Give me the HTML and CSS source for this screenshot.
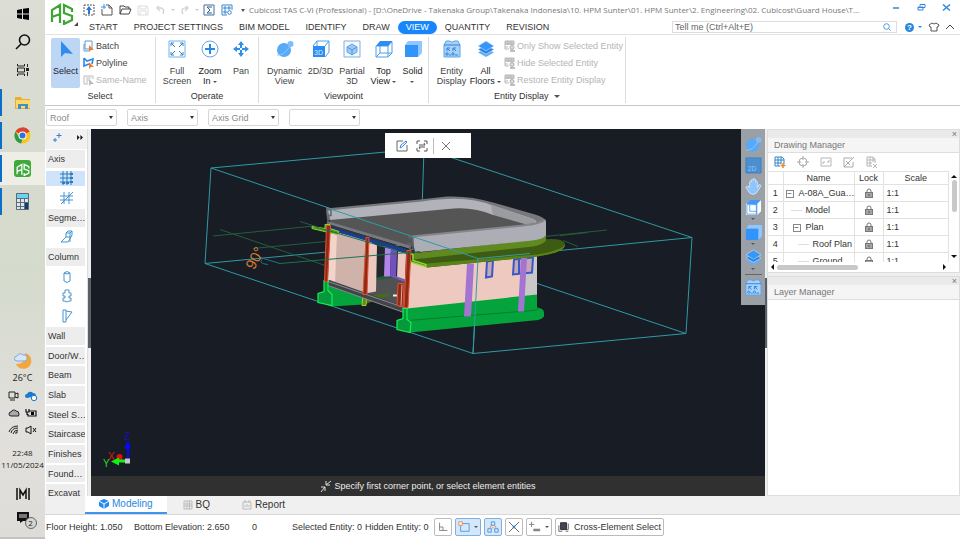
FILE: index.html
```
<!DOCTYPE html>
<html lang="en">
<head>
<meta charset="utf-8">
<title>Cubicost TAS C-VI</title>
<link rel="stylesheet" href="styles.css">
</head>
<body>
<svg class="defs" aria-hidden="true">
  <symbol id="planet" viewBox="0 0 18 18"><circle cx="8" cy="10" r="7" fill="#58a9f8"/><circle cx="14.500" cy="4" r="3" fill="#7dbdfb"/><path d="M1 15Q8 16 14 6" stroke="#8cc6ff" fill="none"/></symbol>
  <symbol id="cube-top" viewBox="0 0 18 18"><path d="M1 6h12v11H1zM5 2h12v11H5M13 17l4-4M1 17l4-4V2" fill="none" stroke="#4d9fe6"/><path d="M1 6l4-5h12.500l-4 5z" fill="#2d8ef0"/></symbol>
  <symbol id="cube-solid" viewBox="0 0 18 18"><path d="M4 1h14v12l-4 4V5H1z" fill="#92c7fd"/><path d="M1 5h13v12H1z" fill="#3194fb"/></symbol>
  <symbol id="layers" viewBox="0 0 18 18"><path d="M9 8l8 4.500L9 17 1 12.500z" fill="#65aff6"/><path d="M9 5l8 4.500L9 14 1 9.500z" fill="#2881df" stroke="#cfe6ff" stroke-width=".6"/><path d="M9 1l8 5-8 5-8-5z" fill="#3797f8" stroke="#cfe6ff" stroke-width=".6"/></symbol>
  <symbol id="entity" viewBox="0 0 18 18"><path d="M3 1h4l1 1h2l1-1h4l2 4v12H1V5z" fill="#a9d2fb" stroke="#5ba4e8"/><path d="M1 5h16M4 8l3 3m0-3H4v3M10 8l3 3m0-3h-3v3" stroke="#2c82d6" fill="none"/><circle cx="4" cy="14" r="1.200" fill="none" stroke="#2c82d6"/><circle cx="10" cy="14" r="1.200" fill="none" stroke="#2c82d6"/><path d="M6 15h2m4 0h3" stroke="#2c82d6"/></symbol>
  <symbol id="lock" viewBox="0 0 10 10"><path d="M3 5V3q0-2 2-2t2 2v2" fill="none" stroke="#777"/><rect x="1.500" y="4.500" width="7" height="5" fill="#a5a5a5" stroke="#777"/><path d="M5 6v2" stroke="#555"/></symbol>
  <symbol id="filter" viewBox="0 0 12 12"><path d="M1 1h9v4H1z" fill="#ccc"/><path d="M1 1h9v4M1 1v8h4M1 4h9M4 1v4M7 1v4M1 7h3" fill="none" stroke="#b9b9b9"/><circle cx="8" cy="7.500" r="2" fill="#ddd" stroke="#aaa"/><path d="M6 11h5" stroke="#aaa" stroke-width="1.500"/></symbol>
  <symbol id="mark" viewBox="0 0 24 24"><path d="M2 21V9l8-5v18M2 16l8-3M22 11V8l-8-4v8l8 3v4l-8 4v-4" fill="none" stroke="currentColor" stroke-width="2.200"/></symbol>
</svg>

<div class="desktop">
  <nav class="taskbar" aria-label="Taskbar">
    <button class="task small" aria-label="Start"><svg width="12" height="12" viewBox="0 0 12 12"><path d="M0 2l5-1v4.600H0zM6 .8L12 0v5.600H6zM0 6.400h5V11L0 10zM6 6.400h6V12l-6-1z" fill="#000"/></svg></button>
    <button class="task small" aria-label="Search"><svg width="16" height="16" viewBox="0 0 16 16"><circle cx="9.500" cy="6" r="5" fill="none" stroke="#111" stroke-width="1.600"/><path d="M6 10l-5 5" stroke="#111" stroke-width="1.600"/></svg></button>
    <button class="task small" aria-label="Task view"><svg width="12" height="12" viewBox="0 0 12 12"><path d="M.5 0v2h7V0M.5 12v-2h7v2M.5 4h7v4h-7zM10.500 0v3M10.500 8v4" fill="none" stroke="#222"/><path d="M9 4h3v3H9z" fill="#222"/></svg></button>
    <button class="task open first" aria-label="File Explorer"><svg width="16" height="14" viewBox="0 0 16 14"><path d="M0 1h6l1 2h8v10H0z" fill="#e9ad32"/><path d="M1 4h14v8H1z" fill="#ffd767"/><path d="M3 13V8h10v5h-3v-3H6v3z" fill="#3f8fcb"/></svg></button>
    <button class="task open" aria-label="Chrome"><svg width="17" height="17" viewBox="0 0 18 18"><circle cx="9" cy="9" r="8.500" fill="#f9c51f"/><path d="M9 9L1.600 4.800A8.500 8.500 0 0 1 16.400 4.800z" fill="#dc4335"/><path d="M9 .5a8.500 8.500 0 0 1 7.400 4.500H9z" fill="#dc4335"/><path d="M1.600 4.800L5.500 11.500 9 13l-1.500 4.400A8.500 8.500 0 0 1 1.600 4.800z" fill="#2a9b4b"/><circle cx="9" cy="9" r="4.200" fill="#fff"/><circle cx="9" cy="9" r="3.200" fill="#2b73df"/></svg></button>
    <button class="task open current" aria-label="Cubicost"><span class="as-tile"><svg width="14" height="14"><use href="#mark"/></svg></span></button>
    <button class="task open" aria-label="Calculator"><svg width="13" height="17" viewBox="0 0 13 17"><rect width="13" height="17" rx="1" fill="#596b7a"/><path d="M1 1h11v4H1z" fill="#6bd2ef"/><path d="M1 6h3v3H1zM5 6h3v3H5zM9 6h3v3H9zM1 10h3v3H1zM5 10h3v3H5zM1 14h3v2H1zM5 14h3v2H5z" fill="#dfe5e9"/><path d="M9 10h3v6H9z" fill="#123e6b"/></svg></button>
    <div class="tray">
      <svg width="18" height="18" viewBox="0 0 18 18"><path d="M11 1a8 8 0 1 1-9 11Q12 13 11 1z" fill="#f2a73d"/><path d="M3 9a2.500 2.500 0 0 1 0-5 3.500 3.500 0 0 1 6-1 3 3 0 0 1 2 6z" fill="#d8e6f8" stroke="#7fa8e6"/></svg>
      <span class="temp">26°C</span>
      <div class="tray-icons">
        <svg viewBox="0 0 12 10"><path d="M1 1h6v6H1zM7 3l3-1v5L7 6M2 9h5" fill="none" stroke="#222"/></svg>
        <svg viewBox="0 0 12 10"><path d="M2 7a2 2 0 0 1 0-4 3.500 3.500 0 0 1 6-1q3 0 3 3z" fill="#1b78d0"/><circle cx="9" cy="7" r="2.700" fill="#fff" stroke="#1b78d0"/></svg>
        <svg viewBox="0 0 12 10"><path d="M3 8a2 2 0 0 1 0-4 3 3 0 0 1 5-1q3 0 3 3t-2 2z" fill="#aaa" stroke="#222"/></svg>
        <svg viewBox="0 0 12 10"><path d="M4 3h7v5H3V6M1 1v3h3V1M2 4v3" fill="none" stroke="#111" stroke-width="1.200"/><path d="M6 4h3v3H6z"/></svg>
        <svg viewBox="0 0 12 10"><path d="M1 7Q3 1 10 1M3 8q1-5 7-5M5 9q1-4 5-4M8 9V7h2" fill="none" stroke="#222"/></svg>
        <svg viewBox="0 0 12 10"><path d="M1 3h2l3-2v8L3 7H1zM8 3l3 4M11 3L8 7" fill="none" stroke="#111"/></svg>
      </div>
      <div class="clock"><span>22:48</span><span>11/05/2024</span></div>
      <svg class="m-icon" width="14" height="12" viewBox="0 0 14 12"><path d="M1 0v12M13 0v12M4 11V2l3 5 3-5v9" fill="none" stroke="#111" stroke-width="1.500"/></svg>
      <div class="notice"><svg width="12" height="11" viewBox="0 0 12 11"><path d="M0 0h12v9H6L3 11V9H0z" fill="#111"/><path d="M2 3h8M2 5h8" stroke="#ddd"/></svg><span class="count">2</span></div>
    </div>
  </nav>

  <div class="app">
    <header class="header">
      <div class="logo"><svg width="24" height="24"><use href="#mark"/></svg><i></i></div>
      <div class="titlebar">
        <div class="quick">
          <svg viewBox="0 0 12 12"><path d="M1 1h10v10H1z" fill="none" stroke="#555" stroke-dasharray="2 1"/><path d="M6 2l3 4H7v4H5V6H3z" fill="#2478d8"/></svg>
          <svg viewBox="0 0 12 12"><path d="M5 1h3l3 3v7H1V5" fill="none" stroke="#555"/><path d="M8 1v3h3" fill="none" stroke="#555"/><path d="M3 0v5M0 3h5" stroke="#3a91e9"/></svg>
          <svg viewBox="0 0 12 12"><path d="M1 10V2h4l1 1h4v2M1 10l2-5h9l-2 5z" fill="none" stroke="#444"/></svg>
          <svg viewBox="0 0 12 12"><path d="M1 2h9l1 1v8H1zM3 2v3h6V2M3 11V7h6v4" fill="none" stroke="#ddd"/></svg>
          <svg viewBox="0 0 12 12"><path d="M4 2L2 4l3 3M2 4h4q4 1 2 6" fill="none" stroke="#d5d5d5" stroke-width="1.500"/></svg>
          <i class="caret pale"></i>
          <svg viewBox="0 0 12 12"><path d="M7 2l2 2-3 3M9 4H6Q1 5 4 10" fill="none" stroke="#d5d5d5" stroke-width="1.500"/></svg>
          <i class="caret pale"></i>
          <svg viewBox="0 0 12 12"><path d="M1 1h10v10H1z" fill="none" stroke="#446f98"/><path d="M9 3H4l3 3-3 3h5" fill="none" stroke="#24639d"/></svg>
          <svg viewBox="0 0 12 12"><path d="M1 11V1h10v5M1 11h5M3 3h2v2H3zM7 3h2v2H7zM3 7h2v2H3z" fill="none" stroke="#3484cf"/><circle cx="8.500" cy="8.500" r="1.800" fill="none" stroke="#3484cf"/></svg>
          <i class="caret more"></i>
        </div>
        <div class="doc-title">Cubicost TAS C-VI (Professional) - [D:\OneDrive - Takenaka Group\Takenaka Indonesia\10. HPM Sunter\01. HPM Sunter\2. Engineering\02. Cubicost\Guard House\T…</div>
        <div class="window-buttons">
          <button aria-label="Minimize"><svg viewBox="0 0 9 9"><path d="M1 5h6" stroke="#2e86df" stroke-width="1.500"/></svg></button>
          <button aria-label="Restore"><svg viewBox="0 0 9 9"><path d="M3 3V1.500h5v3H6M1 4h5v3H1zM1 4.500h5" fill="none" stroke="#2e86df"/></svg></button>
          <button aria-label="Close"><svg viewBox="0 0 9 9"><path d="M1 1.500l7 6M8 1.500l-7 6" stroke="#2e86df" stroke-width="1.500"/></svg></button>
        </div>
      </div>
      <div class="menubar">
        <nav class="menu">
          <a href="#">START</a><a href="#">PROJECT SETTINGS</a><a href="#">BIM MODEL</a><a href="#">IDENTIFY</a><a href="#">DRAW</a><a href="#" class="on">VIEW</a><a href="#">QUANTITY</a><a href="#">REVISION</a>
        </nav>
        <div class="search"><input type="text" aria-label="Tell me" placeholder="Tell me (Ctrl+Alt+E)"><svg width="8" height="8" viewBox="0 0 8 8"><circle cx="3.500" cy="3.500" r="2.800" fill="none" stroke="#4d9ce9"/><path d="M5.500 5.500l2 2" stroke="#4d9ce9"/></svg></div>
        <button class="help" aria-label="Help">?</button><i class="caret blue"></i>
        <svg class="shirt" width="10" height="10" viewBox="0 0 10 10"><path d="M3 1q2 2 4 0l3 2-1 2H8v4H2V5H1L0 3z" fill="none" stroke="#555"/></svg>
        <svg width="10" height="8" viewBox="0 0 10 8"><path d="M1 6l4-4 4 4" fill="none" stroke="#444"/></svg>
      </div>
    </header>

    <section class="ribbon" aria-label="View ribbon">
      <div class="group select-group">
        <div class="tools">
          <button class="tool picked"><svg viewBox="0 0 18 18"><path d="M4 1v16l4-4 8 1z" fill="#2f8bee"/></svg><span>Select</span></button>
          <div class="stack">
            <button><svg viewBox="0 0 12 12"><path d="M2 1h7v8H2zM1 4v7h5" fill="none" stroke="#5b9bd2"/><path d="M6 5l5 5-3 0-2 2z" fill="#ee7d31"/></svg>Batch</button>
            <button><svg viewBox="0 0 12 12"><path d="M1 1l3 3 6-2-1 5M1 1v8l5-2" fill="none" stroke="#288ae5" stroke-width="1.600"/><path d="M6 5l5 5-3 0-2 2z" fill="#ee7d31"/></svg>Polyline</button>
            <button disabled><svg viewBox="0 0 12 12"><path d="M1 2h9v3M1 2v8h4M3 4h5M3 6h3M3 8h2" fill="none" stroke="#bbb"/><path d="M6 5l5 5-3 0-2 2z" fill="#bbb"/></svg>Same-Name</button>
          </div>
        </div>
        <div class="caption">Select</div>
      </div>
      <div class="group operate-group">
        <div class="tools">
          <button class="tool"><svg viewBox="0 0 18 18"><path d="M1 1h16v16H1z" fill="none" stroke="#72b3ee"/><path d="M3 6V3h3M3 3l4 4M12 3h3v3M15 3l-4 4M3 12v3h3M3 15l4-4M12 15h3v-3M15 15l-4-4" fill="none" stroke="#3183cc"/></svg><span>Full<br>Screen</span></button>
          <button class="tool dark"><svg viewBox="0 0 18 18"><circle cx="9" cy="9" r="8" fill="none" stroke="#5ba9ee"/><path d="M9 4v10M4 9h10" stroke="#2886e6" stroke-width="2"/></svg><span>Zoom<br>In <i class="caret"></i></span></button>
          <button class="tool"><svg viewBox="0 0 18 18"><path d="M9 1l3 4h-2v3H8V5H6zM9 17l3-4h-2v-3H8v3H6zM1 9l4-3v2h3v2H5v2zM17 9l-4-3v2h-3v2h3v2z" fill="#2e8eed"/></svg><span>Pan</span></button>
        </div>
        <div class="caption">Operate</div>
      </div>
      <div class="group view-group">
        <div class="tools">
          <button class="tool"><svg><use href="#planet"/></svg><span>Dynamic<br>View</span></button>
          <button class="tool"><svg viewBox="0 0 18 18"><path d="M1 6l4-5h12v11l-4 5M13 6l4-5M5 1v5" fill="none" stroke="#4d9fe6"/><path d="M1 6h12v11H1z" fill="#2b8cf2"/><text x="2" y="15" class="tiny">3D</text></svg><span>2D/3D</span></button>
          <button class="tool"><svg viewBox="0 0 18 18"><path d="M1 1h16v16H1z" fill="#f4faff" stroke="#86afd6"/><path d="M9 4l5 3v5l-5 3-5-3V7z" fill="#9bcafa" stroke="#67a6e2"/><path d="M4 7l5 3 5-3M9 10v5" fill="none" stroke="#5596d6"/></svg><span>Partial<br>3D</span></button>
          <button class="tool dark"><svg><use href="#cube-top"/></svg><span>Top<br>View <i class="caret"></i></span></button>
          <button class="tool dark"><svg><use href="#cube-solid"/></svg><span>Solid<br><i class="caret"></i></span></button>
        </div>
        <div class="caption">Viewpoint</div>
      </div>
      <div class="group entity-group">
        <div class="tools">
          <button class="tool"><svg><use href="#entity"/></svg><span>Entity<br>Display</span></button>
          <button class="tool dark"><svg><use href="#layers"/></svg><span>All<br>Floors <i class="caret"></i></span></button>
          <div class="stack">
            <button disabled><svg><use href="#filter"/></svg>Only Show Selected Entity</button>
            <button disabled><svg><use href="#filter"/></svg>Hide Selected Entity</button>
            <button disabled><svg><use href="#filter"/></svg>Restore Entity Display</button>
          </div>
        </div>
        <div class="caption">Entity Display <i class="caret big"></i></div>
      </div>
    </section>

    <div class="selectors">
      <label><select aria-label="Category"><option>Roof</option></select></label>
      <label><select aria-label="Element"><option>Axis</option></select></label>
      <label><select aria-label="Type"><option>Axis Grid</option></select></label>
      <label><select aria-label="Name"><option></option></select></label>
    </div>

    <main class="work">
      <aside class="palette">
        <div class="palette-top"><svg width="9" height="9" viewBox="0 0 9 9"><path d="M6 0v5M3.500 2.500h5M2 5v4M0 7h4" stroke="#3183cc"/></svg><svg width="6" height="5" viewBox="0 0 7 6"><path d="M0 0l3 3-3 3zM4 0l3 3-3 3z" fill="#111"/></svg></div>
        <div class="palette-view"><div class="palette-list">
          <span class="head">Axis</span>
          <button class="pick on" aria-label="Grid"><svg viewBox="0 0 14 14"><path d="M0 3h13M0 7h13M0 11h13M3 0v14M7 0v14M11 0v14" stroke="#2c7cc0"/><path d="M10 2h3v2h-3zM10 6h3v2h-3zM10 10h3v2h-3zM2 11h3v2H2zM6 11h3v2H6z" fill="#2c7cc0"/></svg></button>
          <button class="pick" aria-label="Auxiliary axis"><svg viewBox="0 0 14 14"><path d="M0 5h13M0 9h13M4 1v12M9 1v12M1 13L13 1" stroke="#4793cf" fill="none"/></svg></button>
          <span class="head">Segme…</span>
          <button class="pick" aria-label="Segment"><svg viewBox="0 0 14 14"><path d="M1 12l5-5h5l-3 5zM6 7V3l2-2h4v4l-1 2M6 3h4v9M10 3l2-2" stroke="#4793cf" fill="none"/></svg></button>
          <span class="head">Column</span>
          <button class="pick" aria-label="Column"><svg viewBox="0 0 14 14"><path d="M4 3v8q3 3 6 0V3Q7 0 4 3q3 2 6 0" stroke="#4793cf" fill="none"/></svg></button>
          <button class="pick" aria-label="Column profile"><svg viewBox="0 0 14 14"><path d="M5 1h4v3h2v3H9v2h2v3H9q-2 2-4 0H3V9h2V7H3V4h2z" stroke="#4793cf" fill="none"/></svg></button>
          <button class="pick" aria-label="Corbel"><svg viewBox="0 0 14 14"><path d="M3 1v12h3V1zM6 2l6 1-6 8" stroke="#4793cf" fill="none"/></svg></button>
          <span class="head">Wall</span><span class="head">Door/W…</span><span class="head">Beam</span><span class="head">Slab</span><span class="head">Steel S…</span><span class="head">Staircase</span><span class="head">Finishes</span><span class="head">Found…</span><span class="head">Excavat</span>
        </div></div>
      </aside>
      <div class="splitter"><button aria-label="Collapse palette"></button></div>

      <section class="stage" aria-label="3D view">
        <div class="canvas">
          <svg class="scene" viewBox="91 129 674 348" preserveAspectRatio="xMidYMid slice">
            <path d="M478 259L211 168.500 424 149 692 238zM211 168.500L205 264 473 354 686 334 692 238M478 259L473 354M424 149l-3 93M205 264l213-20 268 90" stroke="#2f9aa4" fill="none"/>
            <g stroke="#245d3d" fill="none"><path d="M213 236.500l101-10M220 230l120 41M253 249l114-11M300 222l16 5M545 237l62-6.500M560 236l28-3M563 241l15 6"/></g>
            <path d="M260 258l20 6M262 260q-4 4 6 5" fill="none" stroke="#207582"/>
            <text x="0" y="0" transform="translate(254 271) rotate(-62)" class="angle">90°</text>
            <!-- interior -->
            <path d="M376 246l35 8-4 56-32-18z" fill="#22262d"/>
            <path d="M376 279l30-3v36l-42-16z" fill="#505153"/>
            <path d="M377 278l8-2 8 2-17 3z" fill="#235b37"/>
            <path d="M330 231l37 9-2 54-37-12z" fill="#cfb3ab"/>
            <path d="M330 231l7 2-2 51-7-2z" fill="#f3d4cb"/>
            <path d="M367 240l10 6-1 46-11 2z" fill="#ecc8c0"/>
            <path d="M398 252l8 2-1 28-8-3z" fill="#ecc8c0"/>
            <path d="M385 248h6l-1 29h-6z" fill="#b184e8"/><path d="M391 248l6 2-1 28-6-1z" fill="#7250bf"/><path d="M391 276l14 5" stroke="#6b5bc4" stroke-width="2"/>
            <path d="M393 296h4" stroke="#eee" stroke-width="2"/>
            <!-- right walls -->
            <path d="M408 261l129-5v40l-130 14z" fill="#edc9c0"/>
            <path d="M527 257l10-1v41l-12 2z" fill="#c9c7c7"/>
            <!-- plinth -->
            <path d="M407 309l130-14v13q7 1 7 5v4q-3 4-11 4l-123 12-7-4 4-7z" fill="#05a33b"/>
            <path d="M408 321l125-10q8-1 4-3" fill="none" stroke="#087e31"/>
            <!-- windows -->
            <path d="M487 262l6-1-1 16-6 1z" fill="#c7a6b6" stroke="#3858c8" stroke-width="2"/>
            <path d="M514 260l19-2-1 15-19 2zM519 260v15" fill="#c7a6b6" stroke="#3858c8" stroke-width="2"/>
            <path d="M467 264h7l-3 53h-7zM521 258h6l-3 54h-6z" fill="#a374d1"/>
            <!-- canopy -->
            <path d="M412 256l125-15q24-4 28 3 1 8-28 13l-110 11-16-6z" fill="#3d5b12"/>
            <path d="M427 264l110-9q24-4 28-10 1 8-28 12l-110 11z" fill="#588417"/>
            <path d="M411 254l122-14q10-1 13-4v5q-3 4-13 6l-120 13z" fill="#60891f"/>
            <path d="M409 254l4 1v6l13 4v2l-17-5" fill="none" stroke="#91d52d" stroke-width="1.500"/>
            <!-- roof -->
            <path d="M326 209l94-9 27-3q23-1 46 6l42 12q10 3 11 7l-7 8-124 12-88-22z" fill="#77777c"/>
            <path d="M328 211l94-9q45-7 70 4l40 13q7 3 3 6l-8 2-196-5z" fill="#b2b2ba"/>
            <path d="M491 205l41 14q6 3 1 6l-6 1-34-10z" fill="#9b9ba2"/>
            <path d="M330 220.500l118-11q24-3 45 6l35 10-114 12-2 10-82-25z" fill="#555"/>
            <path d="M412 237l111-11q18-2 22-6 1 1 1 4v12q-3 4-14 5l-117 12z" fill="#adadb6"/>
            <path d="M412 237l111-11q18-2 22-6" fill="none" stroke="#85858c" stroke-width="2"/>
            <path d="M327 223l84 25" stroke="#777980" stroke-width="3"/><path d="M330 226l79 25" stroke="#34373c" stroke-width="2"/>
            <path d="M326 210h5v6h-3v12M408 238h5v12h-3v-6h-3" fill="none" stroke="#63666d" stroke-width="1.500"/>
            <path d="M331 229l76 23" stroke="#173f91" stroke-width="3"/>
            <!-- left canopy and footings -->
            <path d="M312 227l13 2v-4h5v4l9 3-2 3-25-6z" fill="#5c8f1d" stroke="#88d62b"/>
            <path d="M328 286l35 11v8l-31 2-3-9z" fill="#05a33b"/>
            <path d="M364 296l24-2 4 1-25 9-4 1z" fill="#466b1f"/><path d="M363 294h4l-1 12h-4z" fill="#62891c" stroke="#9ad038"/>
            <path d="M328 283l76 27" stroke="#414449" stroke-width="6"/><path d="M328 282l76 26M328 286l76 27" stroke="#888b90"/>
            <path d="M324 281h4v10l4 4v11l-14-3v-9l6-2z" fill="#06983a" stroke="#13ef55" stroke-width="1.200"/>
            <path d="M403 309h4v11l4 3-1 10-13-3v-9l6-2z" fill="#06983a" stroke="#13ef55" stroke-width="1.200"/>
            <path d="M326.500 226h4l-3 56h-3zM366 238h3l-2 57h-4zM407 251h4l-3 57h-4zM398 284h6l-1 23-6-1z" fill="#8c2b18" stroke="#e25031"/>
            <path d="M402 285l-1 21" stroke="#e8aa9b"/>
            <path d="M280 264l140-12M314 227l93 27" fill="none" stroke="#1b7450"/>
            <path d="M326 208L478 259 530 254M478 259L473 354" fill="none" stroke="#309da4"/>
            <!-- axes gizmo -->
            <g class="axes"><text x="124" y="440" fill="#1010c8">Z</text><text x="108" y="460" fill="#e01818">X</text><text x="103" y="467" fill="#20df20">Y</text></g>
            <path d="M127 461v-12h-3l4-8 3 8h-2v12z" fill="#0707ff"/><circle cx="119.500" cy="457.500" r="3" fill="#e60c0c"/><path d="M126 460v3h-7v3l-8-4 8-4v2z" fill="#0df50d"/><path d="M125 459h5v5h-5z" fill="#c7c7c7"/>
          </svg>
          <div class="float-bar">
            <button aria-label="Edit"><svg viewBox="0 0 12 12"><path d="M7 1H1v10h10V5" fill="none" stroke="#666"/><path d="M4 8l1-3 5-4 1 1-5 5z" fill="none" stroke="#368ce6"/></svg></button>
            <button aria-label="Range"><svg viewBox="0 0 12 12"><path d="M1 4V1h3M8 1h3v3M1 8v3h3M8 11h3V8M3 5h6L8 3M9 7H3l1 2" fill="none" stroke="#555"/></svg></button>
            <button class="divided" aria-label="Close"><svg viewBox="0 0 12 12"><path d="M2 2l8 8M10 2l-8 8" stroke="#777"/></svg></button>
          </div>
          <div class="side-bar">
            <button aria-label="Dynamic view"><svg><use href="#planet"/></svg></button>
            <button aria-label="2D"><svg viewBox="0 0 18 18"><path d="M1 1h16v16H1z" fill="#4c8fd0" stroke="#3d83c8"/><text x="3" y="15" class="tiny blue">2D</text></svg></button>
            <button aria-label="Pan"><svg viewBox="0 0 18 18"><path d="M5 10V4q1-2 2 0V2q1-2 2 0V1q2-1 2 1v2q2-2 2 0v6l2-3q3 0 1 3l-4 6q-4 3-7 0L1 10q1-3 4 0z" fill="#8ec5fb" stroke="#cfe6fc"/></svg></button>
            <button class="drop" aria-label="Top view"><svg viewBox="0 0 18 18"><path d="M1 5l4-4h12v12l-4 4H1z" fill="#fff"/><path d="M2 6h10v10H2zM5 6v7h7" fill="none" stroke="#63a8e9"/><path d="M1 5l4-4h12l-4 4v12h-1V6z" fill="#4199f6"/></svg><i class="caret"></i></button>
            <button class="drop" aria-label="Solid"><svg><use href="#cube-solid"/></svg><i class="caret"></i></button>
            <button class="drop" aria-label="Floors"><svg><use href="#layers"/></svg><i class="caret"></i></button>
            <button class="last" aria-label="Entity display"><svg><use href="#entity"/></svg></button>
          </div>
        </div>
        <div class="prompt"><svg width="11" height="11" viewBox="0 0 11 11"><path d="M1 6h4v4M5 6l-4 5M6 0v4h4M6 4l5-4" fill="none" stroke="#ddd"/></svg>Specify first corner point, or select element entities</div>
      </section>
      <div class="splitter right"><button aria-label="Collapse panels"></button></div>

      <aside class="panels">
        <section class="panel drawing">
          <div class="grip"><button aria-label="Close panel">×</button></div>
          <h2>Drawing Manager</h2>
          <div class="panel-tools">
            <svg viewBox="0 0 12 12"><path d="M1 1h7l2 2v5M1 1v9h5M1 4h9M1 7h6M4 1v9M7 1v7" fill="none" stroke="#3284c7"/><path d="M9 7v5M6.500 9.500h5" stroke="#e8892b" stroke-width="1.500"/></svg>
            <svg viewBox="0 0 12 12"><circle cx="6" cy="6" r="4" fill="none" stroke="#aaa"/><path d="M6 0v4M6 8v4M0 6h4M8 6h4" stroke="#aaa"/></svg>
            <svg viewBox="0 0 12 12"><path d="M1 2h10v8H1zM3 8V6h2M9 4v2H7" fill="none" stroke="#b5b5b5"/></svg>
            <svg viewBox="0 0 12 12"><path d="M9 2H1v9h9V6M1 11L11 1M3 5l4 4" fill="none" stroke="#aaa"/></svg>
            <svg viewBox="0 0 12 12"><path d="M1 1h6l2 2v4M1 1v9h5M1 4h8M1 7h5M4 1v9M7 1v5M7 8l4 4M11 8l-4 4" fill="none" stroke="#b5b5b5"/></svg>
          </div>
          <div class="grid-box">
            <div class="grid-clip"><table>
              <colgroup><col class="c-num"><col class="c-name"><col class="c-lock"><col></colgroup>
              <thead><tr><th></th><th>Name</th><th>Lock</th><th>Scale</th></tr></thead>
              <tbody>
                <tr><td>1</td><td class="l0"><i class="box">−</i>A-08A_Gua…</td><td><svg><use href="#lock"/></svg></td><td>1:1</td></tr>
                <tr><td>2</td><td class="l1"><i class="twig"></i>Model</td><td><svg><use href="#lock"/></svg></td><td>1:1</td></tr>
                <tr><td>3</td><td class="l1b"><i class="box">−</i>Plan</td><td><svg><use href="#lock"/></svg></td><td>1:1</td></tr>
                <tr><td>4</td><td class="l2"><i class="twig"></i>Roof Plan</td><td><svg><use href="#lock"/></svg></td><td>1:1</td></tr>
                <tr><td>5</td><td class="l2"><i class="twig"></i>Ground</td><td><svg><use href="#lock"/></svg></td><td>1:1</td></tr>
              </tbody>
            </table></div>
            <div class="vbar"><i class="up"></i><i class="thumb"></i><i class="down"></i></div>
            <div class="hbar"><i class="left"></i><i class="thumb"></i><i class="right-arrow"></i></div>
          </div>
        </section>
        <section class="panel layers">
          <div class="grip"><button aria-label="Close panel">×</button></div>
          <h2>Layer Manager</h2>
        </section>
      </aside>
    </main>

    <nav class="tabs">
      <a href="#" class="on"><svg viewBox="0 0 10 10"><path d="M5 0l5 2v5l-5 3-5-3V2z" fill="#258bea"/><path d="M0 2l5 3 5-3M5 5v5" fill="none" stroke="#fff"/></svg>Modeling</a>
      <a href="#"><svg viewBox="0 0 10 10"><path d="M1 1h8v8H1zM1 4h8M1 6h8M4 1v8M6.500 1v8" fill="none" stroke="#bbb"/></svg>BQ</a>
      <a href="#"><svg viewBox="0 0 10 10"><path d="M1 2h8v7H1zM3 0v3M7 0v3M3 7V5M5 7V4M7 7V5" fill="none" stroke="#bbb"/></svg>Report</a>
    </nav>

    <footer class="status">
      <div class="facts"><span>Floor Height: 1.050</span><span>Bottom Elevation: 2.650</span><span>0</span><span>Selected Entity: 0</span><span>Hidden Entity: 0</span></div>
      <button aria-label="Ortho"><svg viewBox="0 0 14 14"><path d="M3 2v9h9M3 7h4v4" fill="none" stroke="#777"/></svg></button>
      <button class="on" aria-label="Snap"><svg viewBox="0 0 14 14"><path d="M3 3h10v9H3z" fill="none" stroke="#4c94d8"/><path d="M1 1h4v4H1z" fill="#fff" stroke="#e78445"/></svg><i class="caret"></i></button>
      <button class="on" aria-label="Group"><svg viewBox="0 0 14 14"><path d="M5 1h4v4H5zM1 9h4v4H1zM9 9h4v4H9z" fill="none" stroke="#3f8fdc"/><path d="M5 5L3 9M9 5l2 4M6 8h2" stroke="#e78445"/></svg></button>
      <button aria-label="Intersection"><svg viewBox="0 0 14 14"><path d="M1 1l12 12M13 1L1 13" stroke="#555"/><path d="M5 7h4M7 5v4" stroke="#2d8eed"/></svg></button>
      <button aria-label="Point input"><svg viewBox="0 0 14 14"><path d="M3 1v6M0 4h6" stroke="#777"/><path d="M5 9h8v3H5z" fill="#888"/></svg><i class="caret"></i></button>
      <button class="wide"><svg viewBox="0 0 14 14"><path d="M3 2h7v8H3z" fill="#445" stroke="#222"/><path d="M1 5v7h4M12 3v7h-2M9 12h3" stroke="#555" fill="none"/></svg>Cross-Element Select</button>
    </footer>
  </div>
</div>
</body>
</html>
```
FILE: styles.css
```
* { box-sizing: border-box; }
html, body { height: 100%; margin: 0; }
body { font: 9px/10px "Liberation Sans", Arial, sans-serif; color: #333; background: #fff; overflow: hidden; }
button, input, select { font: inherit; color: inherit; margin: 0; padding: 0; border: 0; background: none; }
a { color: inherit; text-decoration: none; }
svg { display: block; flex: none; overflow: visible; }
.defs { position: absolute; width: 0; height: 0; }
.desktop { display: flex; height: 100vh; }

.caret { display: inline-block; flex: none; border: 2px solid transparent; border-top-color: #555; border-bottom: 0; vertical-align: middle; }
.caret.pale { border-top-color: #ccc; }
.caret.blue { border-top-color: #2e86df; }
.caret.big { border-width: 3px 3px 0; margin-left: 3px; }
.caret.more { border-top-width: 3px; }

/* Taskbar */
.taskbar { flex: none; width: 45px; display: flex; flex-direction: column; background: linear-gradient(#dcddd5, #d4dacc 50%, #e2e0dd 80%, #dedcd9); border-bottom: 2px solid #c5c3c0; font-family: "Open Sans", "Noto Sans", sans-serif; color: #222; }
.task { display: flex; align-items: center; justify-content: center; height: 33px; flex: none; position: relative; }
.task.small { height: 28px; }
.task.first { margin-top: 2px; }
.task.open::before { content: ""; position: absolute; left: 0; top: 3px; bottom: 3px; width: 2px; background: #0b6fc7; }
.task.current { background: #eeeee6; }
.as-tile { display: flex; align-items: center; justify-content: center; width: 17px; height: 17px; border-radius: 3px; background: #3daa3a; color: #fff; }
.tray { margin-top: auto; display: flex; flex-direction: column; align-items: center; padding-bottom: 6px; }
.temp { line-height: 12px; margin-top: 2px; }
.tray-icons { display: grid; grid-template-columns: 12px 12px; gap: 7px 5px; margin: 7px 0 12px; }
.tray-icons svg { width: 12px; height: 10px; }
.clock { display: flex; flex-direction: column; align-items: center; font-size: 8px; line-height: 12px; }
.m-icon { margin: 17px 0 12px; }
.notice { position: relative; padding: 0 8px 8px 0; margin-left: 8px; }
.count { position: absolute; right: 0; bottom: 2px; width: 12px; height: 12px; border: 1px solid #666; border-radius: 6px; background: #d5d5d3; font-size: 8px; line-height: 10px; text-align: center; }

.app { flex: 1; min-width: 0; display: flex; flex-direction: column; }

/* Header */
.header { display: grid; grid-template-columns: 38px 1fr; grid-template-rows: 20px 14px; border-bottom: 1px solid #e2e2e2; }
.logo { grid-row: 1 / 3; display: flex; align-items: flex-start; color: #3da535; padding: 1px 0 0 5px; }
.logo i { border: 2px solid transparent; border-right-color: #444; border-bottom-color: #444; align-self: flex-end; margin-bottom: 8px; }
.titlebar { display: flex; align-items: center; min-width: 0; color: #777; }
.quick { flex: none; display: flex; align-items: center; gap: 6px; width: 166px; }
.quick svg { width: 12px; height: 12px; }
.quick .caret { margin: 0 -2px; }
.quick .more { margin-left: 2px; }
.doc-title { flex: none; font-family: "Open Sans", "Liberation Sans", sans-serif; font-size: 8px; white-space: nowrap; }
.window-buttons { flex: none; display: flex; gap: 16px; margin-left: auto; padding: 0 9px 6px 0; }
.window-buttons svg { width: 9px; height: 9px; }
.menubar { display: flex; align-items: center; padding-right: 5px; }
.menu { display: flex; }
.menu a { padding: 0 8px; line-height: 13px; border-radius: 7px; font-size: 9px; color: #333; }
.menu a:first-child { padding-left: 6px; }
.menu a.on { background: #1687fb; color: #fff; }
.search { display: flex; align-items: center; width: 225px; height: 12px; margin-left: auto; border: 1px solid #ddd; padding: 0 5px 0 2px; }
.search input { flex: 1; min-width: 0; outline: 0; }
.search input::placeholder { color: #666; opacity: 1; }
.help { width: 9px; height: 9px; border-radius: 5px; margin: 0 4px 0 8px; background: #2787e0; color: #fff; font-size: 8px; line-height: 9px; font-weight: bold; }
.shirt { margin: 0 6px 0 7px; }

/* Ribbon */
.ribbon { display: flex; height: 71px; border-bottom: 1px solid #c6c6c6; }
.group { display: flex; flex-direction: column; margin: 2px 0; border-right: 1px solid #ddd; }
.tools { display: flex; height: 52px; color: #444; }
.caption { text-align: center; line-height: 14px; color: #333; }
.select-group { width: 111px; }
.operate-group { width: 103px; }
.view-group { width: 170px; }
.entity-group { width: 197px; }
.select-group .tools { padding-left: 6px; }
.operate-group .tools { display: grid; grid-template-columns: 32px 34px 28px; padding-left: 5px; }
.view-group .tools { display: grid; grid-template-columns: 39px 33px 30px 33px 25px; padding-left: 6px; }
.entity-group .tools { display: grid; grid-template-columns: 31px 37px 1fr; padding-left: 7px; }
.tool { display: flex; flex-direction: column; align-items: center; gap: 8px; padding-top: 3px; line-height: 10px; white-space: nowrap; }
.tool svg { width: 18px; height: 18px; }
.tool.dark { color: #222; }
.tool.picked { width: 29px; height: 50px; margin-top: 1px; padding-top: 2px; background: #bdd6f3; color: #223; border-radius: 2px; }
.stack { display: flex; flex-direction: column; padding-left: 3px; }
.entity-group .stack { padding-left: 0; }
.stack button { display: flex; align-items: center; gap: 1px; height: 17px; white-space: nowrap; }
.stack svg { width: 12px; height: 12px; }
.stack button:disabled { color: #b4b4b4; }
.tiny { font-size: 7px; fill: #d8ebff; }
.tiny.blue { fill: #94c4f0; }

.selectors { display: flex; gap: 10px; height: 23px; align-items: center; padding-left: 1px; }
.selectors label { position: relative; width: 71px; height: 17px; }
.selectors select { appearance: none; width: 100%; height: 17px; padding: 0 3px; border: 1px solid #d6d6d6; border-radius: 2px; color: #8a8a8a; background: #fff; }
.selectors label::after { content: ""; position: absolute; right: 4px; top: 7px; border: 2px solid transparent; border-top: 3px solid #333; border-bottom: 0; }

/* Work area */
.work { flex: 1; min-height: 0; display: flex; }
.palette { flex: none; width: 43px; display: flex; flex-direction: column; padding: 0 2px 0 1px; border-right: 1px solid #ddd; }
.palette-top { display: flex; align-items: center; justify-content: space-between; flex: none; height: 20px; margin: 0 -2px 0 -1px; padding: 0 4px 3px 8px; background: #f1f1f1; }
.palette-view { flex: 1; min-height: 0; overflow: hidden; }
.palette-list { display: grid; grid-auto-rows: 1fr; height: 102%; }
.head { min-height: 0; margin: 1px 0; padding-left: 2px; background: #ededed; line-height: 18px; white-space: nowrap; }
.pick { display: flex; align-items: center; justify-content: center; margin: 2px 0; min-height: 0; }
.pick.on { background: #cfe4fb; }
.pick svg { width: 14px; height: 14px; }
.splitter { flex: none; width: 3px; display: flex; align-items: center; background: #eee; }
.splitter button { width: 3px; height: 70px; background: #5a6069; }
.splitter.right { width: 2px; }
.stage { flex: 1; min-width: 0; display: flex; flex-direction: column; background: #181c24; }
.canvas { flex: 1; min-height: 0; position: relative; }
.scene { width: 100%; height: 100%; overflow: hidden; }
.angle { font-size: 15px; fill: #d67a33; }
.axes { font-size: 10px; }
.float-bar { position: absolute; left: 50%; top: 4px; transform: translateX(-50%); display: flex; align-items: center; gap: 8px; height: 25px; padding: 0 19px 0 11px; background: #fff; }
.float-bar svg { width: 12px; height: 12px; }
.float-bar .divided { border-left: 1px solid #bbb; padding: 2px 0 2px 6px; margin-left: -3px; }
.side-bar { position: absolute; right: 0; top: 0; width: 24px; height: 176px; padding-top: 7px; display: flex; flex-direction: column; align-items: center; gap: 4px; background: #9b9fa6; }
.side-bar svg { width: 17px; height: 17px; }
.side-bar .drop { display: flex; flex-direction: column; align-items: center; gap: 2px; }
.side-bar .last { border-top: 1px solid #666; padding-top: 4px; }
.prompt { flex: none; height: 20px; display: flex; align-items: center; justify-content: center; gap: 3px; background: #303030; color: #eee; }

/* Panels */
.panels { flex: none; width: 193px; display: flex; flex-direction: column; gap: 3px; background: #eee; border-left: 1px solid #ddd; }
.panel { background: #fff; border: 1px solid #ddd; border-left: 0; }
.drawing { height: 144px; display: flex; flex-direction: column; }
.layers { flex: 1; }
.grip { flex: none; display: flex; justify-content: flex-end; height: 8px; background: #eaeaea; }
.grip button { width: 9px; line-height: 8px; color: #777; }
.panel h2 { margin: 0; padding: 0 6px; font-size: 9px; font-weight: normal; line-height: 14px; color: #777; background: #f5f5f5; border-bottom: 1px solid #ddd; }
.panel-tools { display: flex; align-items: center; gap: 11px; height: 18px; padding: 0 6px; flex: none; }
.panel-tools svg { width: 12px; height: 12px; }
.grid-box { flex: 1; min-height: 0; display: grid; grid-template-columns: 1fr 10px; grid-template-rows: 1fr 10px; }
.grid-clip { min-height: 0; overflow: hidden; }
table { width: 100%; border-collapse: collapse; table-layout: fixed; color: #333; }
.c-num { width: 15px; }
.c-name { width: 71px; }
.c-lock { width: 29px; }
th, td { border: 1px solid #e2e2e2; border-left: 0; padding: 0 3px; font-weight: normal; height: 17px; white-space: nowrap; text-align: left; }
th { height: 13px; text-align: center; padding: 0; }
td:first-child { text-align: center; }
td:nth-child(3) svg { width: 10px; height: 10px; margin: 0 auto; }
.box { display: inline-block; width: 8px; height: 8px; margin-right: 5px; border: 1px solid #888; font-style: normal; font-size: 8px; line-height: 6px; text-align: center; vertical-align: middle; }
.twig { display: inline-block; width: 11px; margin-right: 4px; border-top: 1px solid #ddd; vertical-align: middle; }
td.l0 { padding: 0 0 0 2px; }
td.l1 { padding-left: 7px; }
td.l1b { padding-left: 9px; }
td.l2 { padding: 0 0 0 14px; }
.vbar, .hbar { display: flex; align-items: center; background: #fff; }
.vbar { flex-direction: column; padding: 4px 0; }
.vbar .thumb { width: 5px; height: 32px; margin-top: 2px; border-radius: 3px; background: #c8c8c8; }
.hbar { padding: 0 3px; }
.hbar .thumb { width: 81px; height: 5px; margin-left: 3px; border-radius: 3px; background: #c8c8c8; }
.up, .down, .left, .right-arrow { border: 3px solid transparent; }
.up { border-bottom-color: #111; border-top: 0; }
.down { border-top-color: #111; border-bottom: 0; margin-top: auto; }
.left { border-right-color: #111; border-left: 0; }
.right-arrow { border-left-color: #111; border-right: 0; margin-left: auto; }

/* Bottom tabs and status */
.tabs { flex: none; display: flex; height: 19px; padding-left: 40px; background: #f0f0f0; border-bottom: 1px solid #d8d8d8; font-size: 10px; }
.tabs a { display: flex; align-items: center; gap: 3px; padding: 0 16px; }
.tabs svg { width: 10px; height: 10px; }
.tabs a.on { background: #fff; color: #2888e2; border-bottom: 2px solid #3d96ec; padding: 0 14px; }
.status { flex: none; display: flex; align-items: center; gap: 3px; height: 24px; padding-left: 1px; }
.facts { display: grid; grid-template-columns: 88px 118px 40px 73px 66px; white-space: nowrap; }
.status button { display: flex; align-items: center; gap: 4px; height: 18px; padding: 0 2px; border: 1px solid #bbb; border-radius: 2px; white-space: nowrap; }
.status button.on { background: #d5e8fb; border-color: #7fb0df; }
.status svg { width: 12px; height: 12px; }
```
